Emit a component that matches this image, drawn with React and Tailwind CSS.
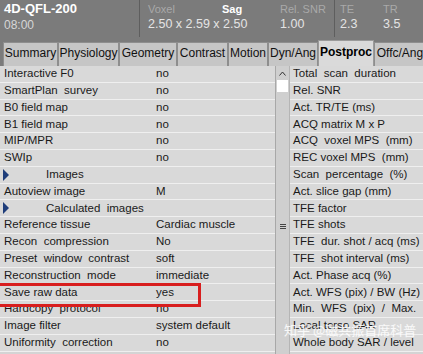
const left = [
  ["Interactive F0", "no"],
  ["SmartPlan  survey", "no"],
  ["B0 field map", "no"],
  ["B1 field map", "no"],
  ["MIP/MPR", "no"],
  ["SWIp", "no"],
  ["Images", null, true],
  ["Autoview image", "M"],
  ["Calculated  images", null, true],
  ["Reference tissue", "Cardiac muscle"],
  ["Recon  compression", "No"],
  ["Preset  window  contrast", "soft"],
  ["Reconstruction  mode", "immediate"],
  ["Save raw data", "yes"],
  ["Hardcopy  protocol", "no"],
  ["Image filter", "system default"],
  ["Uniformity  correction", "no"],
]

const right = [
  "Total  scan  duration",
  "Rel. SNR",
  "Act. TR/TE (ms)",
  "ACQ matrix M x P",
  "ACQ  voxel MPS  (mm)",
  "REC voxel MPS  (mm)",
  "Scan  percentage  (%)",
  "Act. slice gap (mm)",
  "TFE factor",
  "TFE shots",
  "TFE  dur. shot / acq (ms)",
  "TFE  shot interval (ms)",
  "Act. Phase acq (%)",
  "Act. WFS (pix) / BW (Hz)",
  "Min.  WFS  (pix)  /  Max.  BW  (Hz)",
  "Local torso SAR",
  "Whole body SAR / level",
]

const tabs = [
  ["Summary", 55],
  ["Physiology", 61],
  ["Geometry", 58],
  ["Contrast", 51],
  ["Motion", 40],
  ["Dyn/Ang", 50],
  ["Postproc", 56, true],
  ["Offc/Ang", 52],
]

export default function App() {
  return (
    <div
      className="w-[423px] h-[354px] overflow-hidden bg-[#7b7b7b] relative select-none"
      style={{ fontFamily: '"Liberation Sans", Arial, sans-serif' }}
    >
      {/* header */}
      <div className="h-[37px] flex text-[#e4e4e4]">
        <div className="w-[140px] pl-[4px] pt-[1px] border-r border-[#5e5e5e]">
          <div className="text-[13px] font-bold text-white leading-[16px]">4D-QFL-200</div>
          <div className="text-[12px] text-[#d6d6d6] leading-[14px] mt-[1px]">08:00</div>
        </div>
        <div className="w-[74px] pl-[8px] pt-[2px]">
          <div className="text-[11px] text-[#a9a9a9] leading-[14px]">Voxel</div>
          <div className="text-[12.5px] leading-[14px] mt-[1px] whitespace-nowrap">2.50 x 2.59 x 2.50</div>
        </div>
        <div className="w-[65px] pl-[8px] pt-[2px]">
          <div className="text-[11px] font-bold text-white leading-[14px]">Sag</div>
        </div>
        <div className="w-[56px] pl-[1px] pt-[2px] border-r border-[#5e5e5e]">
          <div className="text-[11px] text-[#a9a9a9] leading-[14px]">Rel. SNR</div>
          <div className="text-[12.5px] leading-[14px] mt-[1px]">1.00</div>
        </div>
        <div className="w-[44px] pl-[5px] pt-[2px]">
          <div className="text-[11px] text-[#a9a9a9] leading-[14px]">TE</div>
          <div className="text-[12.5px] leading-[14px] mt-[1px]">2.3</div>
        </div>
        <div className="pl-[4px] pt-[2px]">
          <div className="text-[11px] text-[#a9a9a9] leading-[14px]">TR</div>
          <div className="text-[12.5px] leading-[14px] mt-[1px]">3.5</div>
        </div>
      </div>

      {/* tabs */}
      <div className="h-[29px] flex items-end pl-[3px]">
        {tabs.map(([t, w, active]) => (
          <div
            key={t}
            style={{ width: w }}
            className={
              active
                ? "h-[26px] shrink-0 bg-[#dadada] border border-[#9a9a9a] border-b-0 text-[12px] font-bold text-black flex items-center justify-center pb-[3px]"
                : "h-[24px] shrink-0 bg-[#c6c6c6] border border-[#8e8e8e] border-b-0 text-[12px] text-[#111] flex items-center justify-center pb-[4px]"
            }
          >
            {t}
          </div>
        ))}
      </div>

      {/* content */}
      <div className="flex bg-[#d4d4d4] h-[288px]">
        <div className="w-[276px] shrink-0 border-r border-[#a8a8a8]">
          {left.map(([l, v, group], i) => (
            <div
              key={i}
              className="h-[16.8px] flex items-center border-b border-[#efefef] bg-[#d9d9d9] text-[11.5px] text-[#1a1a1a] whitespace-pre leading-none"
            >
              {group ? (
                <>
                  <span className="w-0 h-0 ml-[3px] border-y-[6px] border-y-transparent border-l-[6px] border-l-[#1e3d7a]" />
                  <span className="ml-[37px]">{l}</span>
                </>
              ) : (
                <>
                  <span className="w-[156px] shrink-0 pl-[4px]">{l}</span>
                  <span>{v}</span>
                </>
              )}
            </div>
          ))}
        </div>

        {/* scrollbar */}
        <div className="w-[14px] shrink-0 flex flex-col bg-[#cfcfcf] border-r border-[#b5b5b5]">
          <div className="h-[14px] flex items-center justify-center">
            <svg width="7" height="5" viewBox="0 0 7 5">
              <path d="M0.5 4.5 L3.5 1 L6.5 4.5" fill="none" stroke="#333" strokeWidth="1" />
            </svg>
          </div>
          <div className="h-[12px] mx-[1px] bg-white" />
          <div className="flex-1 flex items-center justify-center pt-[6px]">
            <div className="flex flex-col gap-[1px]">
              <div className="w-[6px] h-[1px] bg-[#444]" />
              <div className="w-[6px] h-[1px] bg-[#444]" />
              <div className="w-[6px] h-[1px] bg-[#444]" />
            </div>
          </div>
        </div>

        <div className="flex-1 overflow-hidden">
          {right.map((r, i) => (
            <div
              key={i}
              className="h-[16.8px] flex items-center pl-[3px] border-b border-[#efefef] bg-[#d9d9d9] text-[11.5px] text-[#1a1a1a] whitespace-pre leading-none"
            >
              {r}
            </div>
          ))}
        </div>
      </div>

      {/* highlight */}
      <div className="absolute left-[-3px] top-[283px] w-[204px] h-[24px] border-[3px] border-[#d81e1e]" />

      {/* watermark */}
      <div
        className="absolute left-[284px] top-[320px] text-[13px] text-white/85 whitespace-nowrap"
        style={{ fontFamily: '"Noto Sans CJK SC", sans-serif' }}
      >
        知乎 @磁共振首席科普
      </div>
    </div>
  )
}
